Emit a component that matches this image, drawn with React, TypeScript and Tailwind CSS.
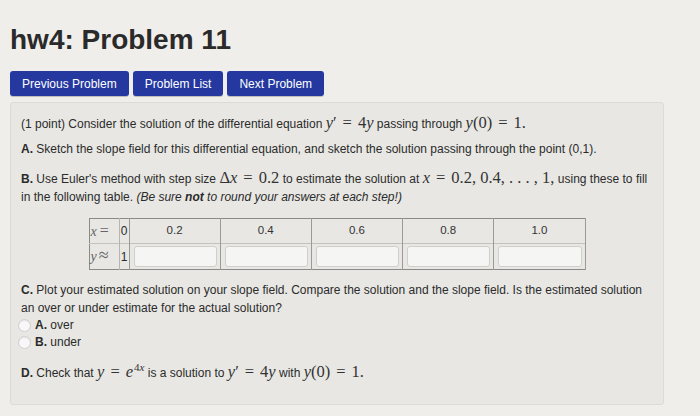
import type { ReactNode } from "react";

const cols = ["0.2", "0.4", "0.6", "0.8", "1.0"];

const M = ({ children }: { children: ReactNode }) => (
  <span className="font-['Liberation_Serif',serif] text-[16.5px] leading-[10px] text-[#333]">{children}</span>
);

const Eq = () => <span className="mx-[6px]">=</span>;

const Radio = ({ label, text }: { label: string; text: string }) => (
  <div className="flex items-center leading-[17px]">
    <span className="ml-[-3px] mr-[4px] h-[13px] w-[13px] rounded-full border border-[#cfcfcf] bg-[#f8f8f8] shadow-[inset_0_1px_1px_rgba(0,0,0,0.08)]" />
    <span>
      <b>{label}</b> {text}
    </span>
  </div>
);

const NavButton = ({ children }: { children: ReactNode }) => (
  <button
    type="button"
    className="h-[25px] rounded-[3px] bg-[#2438a0] px-[12px] text-[12px] text-white shadow-[0_1px_0_rgba(0,0,0,0.2)]"
  >
    {children}
  </button>
);

export default function App() {
  return (
    <div className="min-h-[416px] w-[700px] bg-[#efeeea] pl-[10px] pr-[36px] font-['Liberation_Sans',Arial,sans-serif] text-[#2b2b2b]">
      <h1 className="pt-[24px] text-[28px] font-bold leading-[32px] text-[#2a2a2a]">hw4: Problem 11</h1>

      <div className="mt-[15px] flex gap-[4px]">
        <NavButton>Previous Problem</NavButton>
        <NavButton>Problem List</NavButton>
        <NavButton>Next Problem</NavButton>
      </div>

      <div className="mt-[6px] rounded-[3px] border border-[#dcdbd6] bg-[#e8e7e3] px-[10px] pb-[22px] pt-[12px] text-[12px]">
        <p className="leading-[18px]">
          (1 point) Consider the solution of the differential equation{" "}
          <M>
            <i>y</i>′<Eq />4<i>y</i>
          </M>{" "}
          passing through{" "}
          <M>
            <i>y</i>(0)<Eq />1.
          </M>
        </p>

        <p className="mt-[7px] leading-[18px]">
          <b>A.</b> Sketch the slope field for this differential equation, and sketch the solution passing through
          the point (0,1).
        </p>

        <p className="mt-[12px] leading-[18px]">
          <span className="whitespace-nowrap">
            <b>B.</b> Use Euler's method with step size{" "}
            <M>
              Δ<i>x</i>
              <Eq />
              0.2
            </M>{" "}
            to estimate the solution at{" "}
            <M>
              <i>x</i>
              <Eq />
              0.2, 0.4, . . . , 1,
            </M>{" "}
            using these to fill
          </span>
          <br />
          in the following table.{" "}
          <i>
            (Be sure <b>not</b> to round your answers at each step!)
          </i>
        </p>

        <table className="mx-auto mt-[12px] w-[497px] table-fixed border-collapse border border-[#8a8a8a]">
          <colgroup>
            <col className="w-[30px]" />
            <col className="w-[10px]" />
            {cols.map((c) => (
              <col key={c} />
            ))}
          </colgroup>
          <tbody>
            <tr className="h-[22px] border-b border-[#c2c2c0]">
              <td className="whitespace-nowrap border-r border-[#b5b5b3] pl-[1px] font-['Liberation_Serif',serif] text-[14px] text-[#666]">
                <i>x</i>
                <span className="ml-[3px] text-[16px]">=</span>
              </td>
              <td className="border-r border-[#9a9a98] text-center text-[12px]">0</td>
              {cols.map((c) => (
                <td key={c} className="border-r border-[#9a9a98] text-center text-[11.5px] text-[#333]">
                  {c}
                </td>
              ))}
            </tr>
            <tr className="h-[26px]">
              <td className="whitespace-nowrap border-r border-[#b5b5b3] pl-[1px] font-['Liberation_Serif',serif] text-[14px] text-[#666]">
                <i>y</i>
                <span className="ml-[2px] text-[18px] leading-none">≈</span>
              </td>
              <td className="border-r border-[#9a9a98] text-center text-[12px]">1</td>
              {cols.map((c) => (
                <td key={c} className="border-r border-[#9a9a98] py-[2px] pl-[4px] pr-[3px]">
                  <div className="h-[21px] rounded-[3px] border border-[#cfcfcc] bg-[#f5f5f3]" />
                </td>
              ))}
            </tr>
          </tbody>
        </table>

        <p className="mt-[11px] leading-[18px]">
          <b>C.</b> Plot your estimated solution on your slope field. Compare the solution and the slope field. Is the
          estimated solution
          <br />
          an over or under estimate for the actual solution?
        </p>
        <Radio label="A." text="over" />
        <Radio label="B." text="under" />

        <p className="mt-[13px] leading-[18px]">
          <b>D.</b> Check that{" "}
          <M>
            <i>y</i>
            <Eq />
            <i>e</i>
            <span className="relative top-[-6px] ml-[1px] text-[11px]">
              4<i>x</i>
            </span>
          </M>{" "}
          is a solution to{" "}
          <M>
            <i>y</i>′<Eq />4<i>y</i>
          </M>{" "}
          with{" "}
          <M>
            <i>y</i>(0)<Eq />1.
          </M>
        </p>
      </div>
    </div>
  );
}
